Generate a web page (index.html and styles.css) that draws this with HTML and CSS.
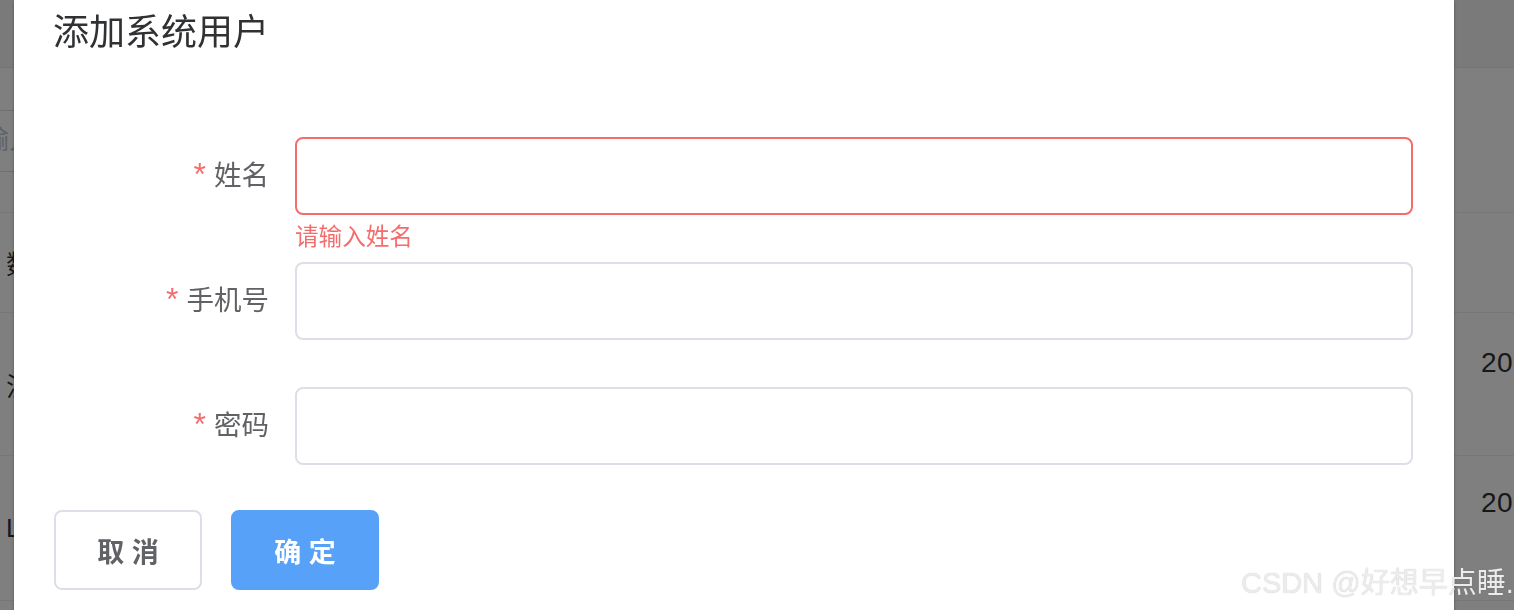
FILE: index.html
```html
<!DOCTYPE html>
<html lang="zh-CN">
<head>
<meta charset="utf-8">
<title>添加系统用户</title>
<link rel="stylesheet" href="styles.css">
</head>
<body>
<div class="page">
  <div class="bg-header"></div>
  <div class="bg-search">
    <div class="bg-input">请输入姓名</div>
  </div>
  <div class="bg-table">
    <div class="bg-row r1"><span class="cell-l">数据</span><span class="cell-r"></span></div>
    <div class="bg-row r2"><span class="cell-l">注册</span><span class="cell-r">2023-06-01</span></div>
    <div class="bg-row r3"><span class="cell-l">Li</span><span class="cell-r">2023-06-02</span></div>
  </div>
</div>
<div class="overlay"></div>

<div class="dialog">
  <div class="dialog-title">添加系统用户</div>
  <form class="form">
    <div class="form-item">
      <label class="form-label"><span class="req">*</span>姓名</label>
      <div class="form-control">
        <div class="input is-error"></div>
        <div class="form-error">请输入姓名</div>
      </div>
    </div>
    <div class="form-item">
      <label class="form-label"><span class="req">*</span>手机号</label>
      <div class="form-control">
        <div class="input"></div>
      </div>
    </div>
    <div class="form-item last">
      <label class="form-label"><span class="req">*</span>密码</label>
      <div class="form-control">
        <div class="input"></div>
      </div>
    </div>
  </form>
  <div class="dialog-footer">
    <button class="btn btn-default" type="button">取 消</button>
    <button class="btn btn-primary" type="button">确 定</button>
  </div>
</div>

<div class="watermark">CSDN @好想早点睡.</div>
</body>
</html>
```

FILE: styles.css
```css
html, body {
  margin: 0;
  padding: 0;
  width: 1514px;
  height: 610px;
  overflow: hidden;
  background: #ffffff;
  font-family: "Liberation Sans", "Noto Sans CJK SC", sans-serif;
}

.page {
  width: 1514px;
  height: 610px;
  background: #ffffff;
}

.bg-header {
  height: 67px;
  background: #f4f4f5;
  border-bottom: 1px solid #e8e9ee;
}

.bg-search {
  height: 144px;
  padding-top: 42px;
  box-sizing: border-box;
}

.bg-input {
  width: 300px;
  height: 62px;
  margin-left: -60px;
  padding-left: 16px;
  box-sizing: border-box;
  border: 1px solid #dcdfe6;
  color: #c0c4cc;
  font-size: 26px;
  line-height: 58px;
}

.bg-table {
  border-top: 1px solid #ebeef5;
}

.bg-row {
  display: flex;
  justify-content: space-between;
  align-items: center;
  border-bottom: 1px solid #ebeef5;
  color: #303133;
  font-size: 26px;
}

.bg-row.r1 { height: 99px; }
.bg-row.r2 { height: 142px; }
.bg-row.r3 { height: 144px; }

.cell-l { margin-left: 6px; }

.cell-r {
  width: 33px;
  padding-right: 2px;
  box-sizing: border-box;
  overflow: hidden;
  white-space: nowrap;
  font-size: 28px;
  letter-spacing: 0.5px;
  margin-bottom: 42px;
}

.bg-row.r3 .cell-r { margin-bottom: 50px; }

.overlay {
  position: fixed;
  inset: 0;
  background: rgba(0, 0, 0, 0.5);
}

.dialog {
  position: absolute;
  left: 14px;
  top: 0;
  width: 1440px;
  height: 640px;
  padding: 0 41px;
  box-sizing: border-box;
  background: #ffffff;
  box-shadow: 0 1px 3px rgba(0, 0, 0, 0.3);
}

.dialog-title {
  height: 64px;
  line-height: 66px;
  font-size: 36px;
  margin-left: -2px;
  color: #303133;
}

.form {
  margin: 73px 0 0 0;
}

.form-item {
  display: flex;
  height: 78px;
  margin-bottom: 47px;
}

.form-item.last {
  margin-bottom: 0;
}

.form-label {
  width: 240px;
  height: 78px;
  box-sizing: border-box;
  padding-right: 26px;
  text-align: right;
  font-size: 27.5px;
  line-height: 78px;
  color: #606266;
}

.req {
  color: #f56c6c;
  margin-right: 8px;
  font-size: 32px;
  line-height: 0;
}

.form-control {
  position: relative;
}

.input {
  width: 1118px;
  height: 78px;
  box-sizing: border-box;
  border: 2px solid #dcdfe6;
  border-radius: 8px;
  background: #ffffff;
}

.input.is-error {
  border-color: #f56c6c;
}

.form-error {
  position: absolute;
  left: 0;
  top: 100%;
  padding-top: 9px;
  font-size: 23.6px;
  line-height: 26px;
  color: #f56c6c;
}

.dialog-footer {
  display: flex;
  gap: 29px;
  padding-top: 45px;
  margin-left: -1px;
}

.btn {
  width: 148px;
  height: 80px;
  box-sizing: border-box;
  border-radius: 8px;
  font-family: "Liberation Sans", "Noto Sans CJK SC", sans-serif;
  font-size: 27px;
  font-weight: bold;
  padding: 0;
  cursor: pointer;
}

.btn-default {
  background: #ffffff;
  border: 2px solid #dcdfe6;
  color: #606266;
}

.btn-primary {
  background: #58a1f9;
  border: 2px solid #58a1f9;
  color: #ffffff;
}

.watermark {
  position: absolute;
  left: 1241px;
  top: 565px;
  white-space: nowrap;
  font-size: 29px;
  line-height: 36px;
  color: #ececec;
  text-shadow: 0 0 1px rgba(0, 0, 0, 0.25);
}
```
